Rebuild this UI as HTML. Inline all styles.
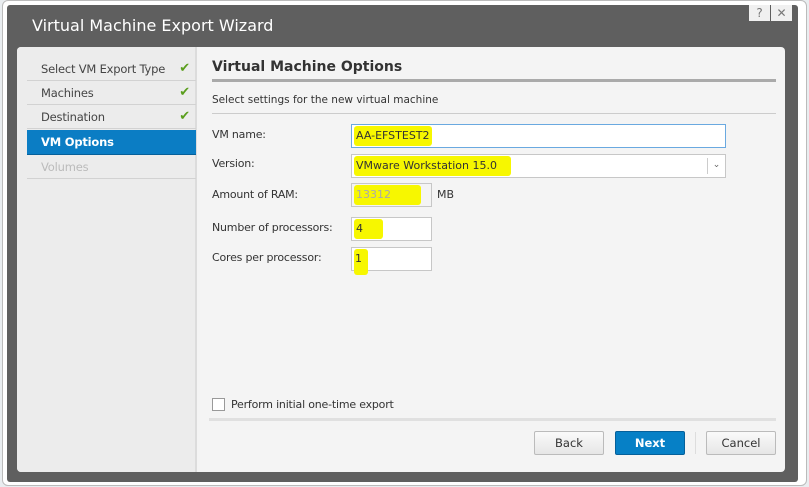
<!DOCTYPE html>
<html><head><style>
*{margin:0;padding:0;box-sizing:border-box}
body{width:809px;height:487px;background:#e9edf0;position:relative;overflow:hidden;font-family:"DejaVu Sans","Liberation Sans",sans-serif;font-size:11.5px;color:#333}
.abs{position:absolute}
.frame{left:2px;top:0;width:805px;height:486px;background:#fff;border-radius:6px;border:1px solid #bbb}
.dlg{left:7px;top:5px;width:791px;height:477px;background:#5f5f5f;border-radius:3px}
.title{left:32px;top:16px;color:#fff;font-size:16px}
.tb{top:5px;width:21px;height:16px;background:#f0f0f0;color:#777;text-align:center;font-size:12px;line-height:16px}
.panel{left:17px;top:47px;width:768px;height:425px;background:#f4f4f4;border-radius:4px;overflow:hidden}
.nav{left:0;top:0;width:180px;height:425px;background:#ececec;border-right:2px solid #dcdcdc}
.ni{position:absolute;left:10px;width:169px;height:24px;border-bottom:1px solid #d2d2d2;padding-left:14px;line-height:24px;color:#444;font-size:11.5px;letter-spacing:-0.2px}
.ck{position:absolute;right:6px;top:0;color:#5a9e1d;font-size:13px}
.lbl{left:212px;font-size:11px;color:#333;letter-spacing:-0.2px}
.inp{background:#fff;border:1px solid #c7c7c7;height:24px;font-size:11px;line-height:22px;padding-left:2px}
.hl{background:#f7f700;padding:0 2px;display:inline-block;height:20px;line-height:20px;margin-top:1px;vertical-align:top;border-radius:3px}
.btn{top:431px;width:70px;height:24px;border:1px solid #bbb;background:linear-gradient(#fafafa,#e6e6e6);border-radius:2px;text-align:center;line-height:22px;font-size:11.5px;color:#333}
</style></head><body>
<div class="abs frame"></div>
<div class="abs dlg"></div>
<div class="abs title">Virtual Machine Export Wizard</div>
<div class="abs tb" style="left:749px">?</div>
<div class="abs tb" style="left:771px">✕</div>
<div class="abs panel">
 <div class="abs nav">
  <div class="ni" style="top:10px">Select VM Export Type<span class="ck">✔</span></div>
  <div class="ni" style="top:34px">Machines<span class="ck">✔</span></div>
  <div class="ni" style="top:58px">Destination<span class="ck">✔</span></div>
  <div class="ni" style="top:83px;height:25px;background:#0b7dc4;color:#fff;font-weight:bold;border-bottom:1px solid #06609a">VM Options</div>
  <div class="ni" style="top:108px;color:#bbb">Volumes</div>
 </div>
</div>
<div class="abs" style="left:212px;top:59px;font-weight:bold;font-size:14px;color:#333">Virtual Machine Options</div>
<div class="abs" style="left:212px;top:79px;width:564px;height:3px;background:#aaa"></div>
<div class="abs" style="left:212px;top:94px;font-size:10.5px">Select settings for the new virtual machine</div>
<div class="abs" style="left:212px;top:113px;width:564px;height:1px;background:#ccc"></div>
<div class="abs lbl" style="top:128px">VM name:</div>
<div class="abs inp" style="left:351px;top:124px;width:375px;border-color:#6aa9e0"><span class="hl">AA-EFSTEST2</span></div>
<div class="abs lbl" style="top:157px">Version:</div>
<div class="abs inp" style="left:351px;top:154px;width:375px"><span class="hl" style="padding-right:14px">VMware Workstation 15.0</span><span class="abs" style="right:0;top:3px;width:18px;height:16px;border-left:1px solid #ccc;text-align:center;line-height:14px;color:#666;font-size:9px">⌄</span></div>
<div class="abs lbl" style="top:188px">Amount of RAM:</div>
<div class="abs inp" style="left:351px;top:183px;width:81px;background:#f4f4f4;color:#aaa"><span class="hl" style="padding-right:30px">13312</span></div>
<div class="abs" style="left:437px;top:188px;font-size:11px">MB</div>
<div class="abs lbl" style="top:221px">Number of processors:</div>
<div class="abs inp" style="left:351px;top:217px;width:81px"><span class="hl" style="padding-right:20px">4</span></div>
<div class="abs lbl" style="top:251px">Cores per processor:</div>
<div class="abs inp" style="left:351px;top:247px;width:81px"><span class="hl" style="padding:0 6px 0 1px;height:26px">1</span></div>
<div class="abs" style="left:212px;top:398px;width:13px;height:13px;border:1px solid #999;background:#fff"></div>
<div class="abs" style="left:231px;top:398px;font-size:11px;letter-spacing:-0.2px">Perform initial one-time export</div>
<div class="abs" style="left:209px;top:418px;width:567px;height:3px;background:#e0e0e0"></div>
<div class="abs btn" style="left:534px">Back</div>
<div class="abs btn" style="left:615px;background:#0680c6;border-color:#05609a;color:#fff;font-weight:bold">Next</div>
<div class="abs" style="left:695px;top:432px;width:1px;height:22px;background:#ddd"></div>
<div class="abs btn" style="left:706px">Cancel</div>
</body></html>
